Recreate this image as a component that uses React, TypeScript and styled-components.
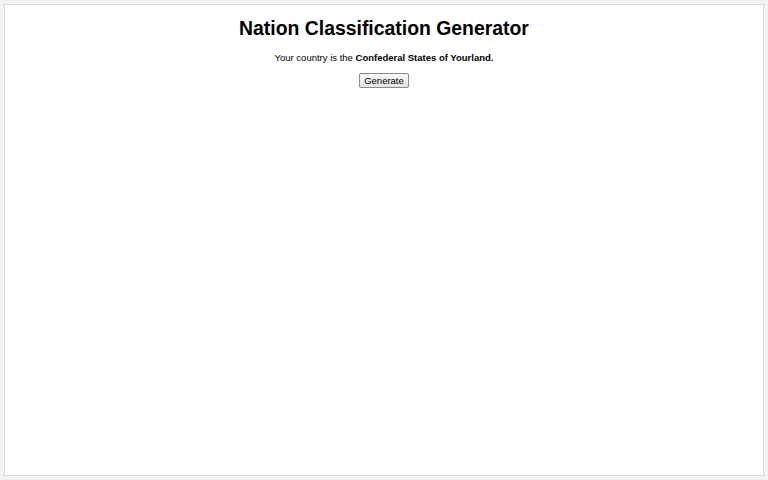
import React from "react";
import styled, { createGlobalStyle } from "styled-components";

const Global = createGlobalStyle`
  html, body { margin: 0; padding: 0; background: #f2f2f2; }
  body { font-family: "Liberation Sans", Arial, sans-serif; }
`;

const Page = styled.div`
  padding: 4px;
  height: 480px;
  box-sizing: border-box;
`;

const Panel = styled.div`
  background: #ffffff;
  border: 1px solid #dcdcdc;
  height: 100%;
  box-sizing: border-box;
  display: flex;
  flex-direction: column;
  align-items: center;
  padding-top: 13px;
`;

const Title = styled.h1`
  margin: 0;
  font-size: 19.4px;
  font-weight: bold;
  color: #000;
  line-height: 20px;
`;

const Result = styled.p`
  margin: 14px 0 0;
  font-size: 9.5px;
  line-height: 12px;
  color: #000;
`;

const Name = styled.b`
  font-weight: bold;
`;

const Button = styled.button`
  margin-top: 9px;
  font-family: "Liberation Sans", Arial, sans-serif;
  font-size: 9.5px;
  padding: 0 4px;
  height: 15px;
  line-height: 11px;
  border: 1px solid #8a8a8a;
  border-radius: 2px;
  background: linear-gradient(#fafafa, #e4e4e4);
  color: #000;
`;

export default function App() {
  return (
    <>
      <Global />
      <Page>
        <Panel>
          <Title>Nation Classification Generator</Title>
          <Result>
            Your country is the <Name>Confederal States of Yourland.</Name>
          </Result>
          <Button>Generate</Button>
        </Panel>
      </Page>
    </>
  );
}
